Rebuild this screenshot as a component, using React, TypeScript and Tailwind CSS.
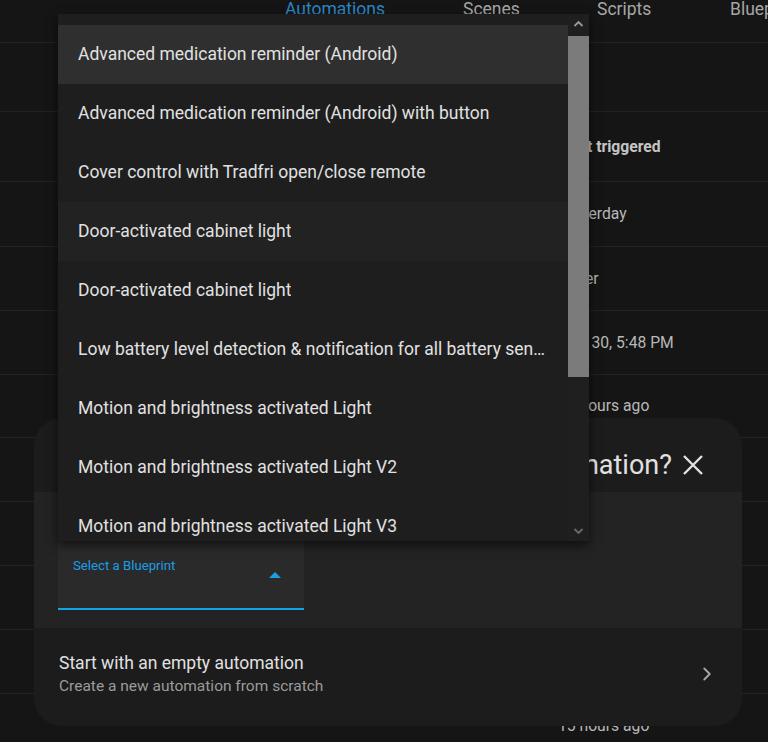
import { ChevronRight } from "lucide-react";

const rows = [
  { h: "h-[69px]", text: "" },
  { h: "h-[70px]", text: "Last triggered", bold: true },
  { h: "h-[65px]", text: "Yesterday" },
  { h: "h-[64px]", text: "Never" },
  { h: "h-[64px]", text: "May 30, 5:48 PM" },
  { h: "h-[63px]", text: "15 hours ago" },
  { h: "h-[64px]", text: "2 days ago" },
  { h: "h-[64px]", text: "Never" },
  { h: "h-[64px]", text: "Yesterday" },
  { h: "h-[64px]", text: "3 hours ago" },
  { h: "h-[64px]", text: "15 hours ago" },
];

const blueprints = [
  "Advanced medication reminder (Android)",
  "Advanced medication reminder (Android) with button",
  "Cover control with Tradfri open/close remote",
  "Door-activated cabinet light",
  "Door-activated cabinet light",
  "Low battery level detection & notification for all battery sensors",
  "Motion and brightness activated Light",
  "Motion and brightness activated Light V2",
  "Motion and brightness activated Light V3",
  "Motion-activated Light",
];

function BlueprintMenu() {
  return (
    <div className="absolute left-[58px] top-[14px] flex h-[527px] w-[531px] overflow-hidden bg-[#1e1e1e] shadow-[0_4px_10px_rgba(0,0,0,0.6)]">
      <div className="min-w-0 flex-1 pt-[11px]">
        {blueprints.map((name, i) => (
          <div
            key={i}
            className={
              "flex h-[59px] items-center pl-[20px] pr-[20px] text-[17.5px] text-[#e1e1e1] " +
              (i === 0 ? "bg-[#2f2f2f]" : i === 3 ? "bg-[#222222]" : "")
            }
          >
            <span className="truncate">{name}</span>
          </div>
        ))}
      </div>
      <div className="relative w-[21px] bg-[#1f1f1f]">
        <svg
          className="absolute left-[5px] top-[6px]"
          width="11"
          height="8"
          viewBox="0 0 11 8"
          fill="none"
          stroke="#9a9a9a"
          strokeWidth="1.8"
        >
          <path d="M1.5 6 L5.5 2 L9.5 6" />
        </svg>
        <div className="absolute left-0 top-[22px] h-[341px] w-[21px] bg-[#7b7b7b]" />
        <svg
          className="absolute bottom-[6px] left-[5px]"
          width="11"
          height="8"
          viewBox="0 0 11 8"
          fill="none"
          stroke="#6a6a6a"
          strokeWidth="1.8"
        >
          <path d="M1.5 2 L5.5 6 L9.5 2" />
        </svg>
      </div>
    </div>
  );
}

function NewAutomationDialog() {
  return (
    <div className="absolute left-[34px] top-[418px] flex h-[308px] w-[708px] flex-col overflow-hidden rounded-[28px] bg-[#1c1c1c]">
      <div className="flex h-[74px] shrink-0 items-center justify-end pr-[38px] pt-[20px]">
        <span className="text-[27px] leading-none text-[#e1e1e1]">
          Create new automation?
        </span>
        <svg
          className="ml-[10px]"
          width="22"
          height="22"
          viewBox="0 0 22 22"
          fill="none"
          stroke="#e1e1e1"
          strokeWidth="2.4"
        >
          <path d="M2 2 L20 20 M20 2 L2 20" />
        </svg>
      </div>
      <div className="h-[136px] shrink-0 bg-[#232323] px-[24px] pt-[49px]">
        <div className="relative h-[69px] w-[246px] rounded-t-[4px] border-b-2 border-[#0ea5e9] bg-[#2a2a2a]">
          <div className="pl-[15px] pt-[18px] text-[13.2px] leading-none text-[#1a9fe6]">
            Select a Blueprint
          </div>
          <svg
            className="absolute right-[23px] top-[31px]"
            width="12"
            height="6"
            viewBox="0 0 12 6"
            fill="#1a9fe6"
          >
            <path d="M0 6 L6 0 L12 6 Z" />
          </svg>
        </div>
      </div>
      <div className="flex flex-1 items-center justify-between pl-[25px] pr-[24px] pb-[6px]">
        <div className="flex flex-col">
          <span className="text-[17.5px] leading-[24px] text-[#e1e1e1]">
            Start with an empty automation
          </span>
          <span className="text-[15.5px] leading-[22px] text-[#9b9b9b]">
            Create a new automation from scratch
          </span>
        </div>
        <ChevronRight size={22} color="#a8a8a8" strokeWidth={2} />
      </div>
    </div>
  );
}

export default function App() {
  return (
    <div className="relative h-[742px] w-[768px] overflow-hidden bg-[#151515] font-['Roboto',sans-serif]">
      <div className="flow-root h-[43px] border-b border-[#222222]">
        <div className="-mt-[2px] flex pl-[285px] text-[17.5px] leading-[22px] text-[#a6a6a6]">
          <span className="w-[178px] shrink-0 text-[#2b88c8]">Automations</span>
          <span className="w-[134px] shrink-0">Scenes</span>
          <span className="w-[133px] shrink-0">Scripts</span>
          <span className="shrink-0 whitespace-nowrap">Blueprints</span>
        </div>
      </div>
      {rows.map((r, i) => (
        <div
          key={i}
          className={
            "flex items-center border-b border-[#222222] " +
            (r.bold ? "pl-[562px] " : "pl-[558px] ") +
            r.h
          }
        >
          <span
            className={
              "whitespace-nowrap text-[15.7px] " +
              (r.bold ? "font-bold text-[#c4c4c4]" : "text-[#b8b8b8]")
            }
          >
            {r.text}
          </span>
        </div>
      ))}
      <NewAutomationDialog />
      <BlueprintMenu />
    </div>
  );
}
